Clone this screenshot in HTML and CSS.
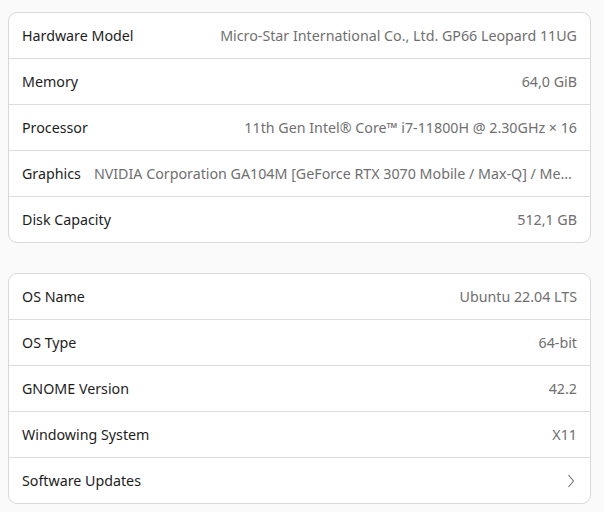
FILE: index.html
```html
<!DOCTYPE html>
<html>
<head>
<meta charset="utf-8">
<link rel="stylesheet" href="styles.css">
</head>
<body>
<div class="page">
  <div class="card">
    <div class="row"><span class="label">Hardware Model</span><span class="value">Micro-Star International Co., Ltd. GP66 Leopard 11UG</span></div>
    <div class="row"><span class="label">Memory</span><span class="value">64,0 GiB</span></div>
    <div class="row"><span class="label">Processor</span><span class="value">11th Gen Intel® Core™ i7-11800H @ 2.30GHz × 16</span></div>
    <div class="row"><span class="label">Graphics</span><span class="value fill">NVIDIA Corporation GA104M [GeForce RTX 3070 Mobile / Max-Q] / Me…</span></div>
    <div class="row"><span class="label">Disk Capacity</span><span class="value">512,1 GB</span></div>
  </div>
  <div class="card">
    <div class="row"><span class="label">OS Name</span><span class="value">Ubuntu 22.04 LTS</span></div>
    <div class="row"><span class="label">OS Type</span><span class="value">64-bit</span></div>
    <div class="row"><span class="label">GNOME Version</span><span class="value">42.2</span></div>
    <div class="row"><span class="label">Windowing System</span><span class="value">X11</span></div>
    <div class="row"><span class="label">Software Updates</span><span class="chev"><svg width="8" height="14" viewBox="0 0 8 14"><path d="M1.5 1 L6.5 7 L1.5 13" fill="none" stroke="#6f6f6f" stroke-width="1.1"/></svg></span></div>
  </div>
</div>
</body>
</html>
```

FILE: styles.css
```css
html, body {
  margin: 0;
  padding: 0;
  background: #fafafa;
}
body {
  font-family: "Noto Sans", "Open Sans", sans-serif;
  font-size: 14.25px;
}
.page {
  padding: 12px 13px 0 8px;
  display: flex;
  flex-direction: column;
  gap: 30px;
}
.card {
  background: #ffffff;
  border: 1px solid #d9d9d9;
  border-radius: 9px;
  overflow: hidden;
}
.row {
  height: 45px;
  display: flex;
  align-items: center;
  justify-content: space-between;
  padding: 0 13px 0 13px;
  border-top: 1px solid #dcdcdc;
  gap: 13px;
}
.row:first-child {
  border-top: none;
}
.label {
  color: #1d1d1d;
  white-space: nowrap;
  flex: none;
}
.value {
  color: #6f6f6f;
  white-space: nowrap;
  overflow: hidden;
  text-overflow: ellipsis;
  min-width: 0;
}
.value.fill {
  flex: 1;
  text-align: left;
}
.chev {
  display: flex;
  align-items: center;
  padding-right: 2px;
}
```
